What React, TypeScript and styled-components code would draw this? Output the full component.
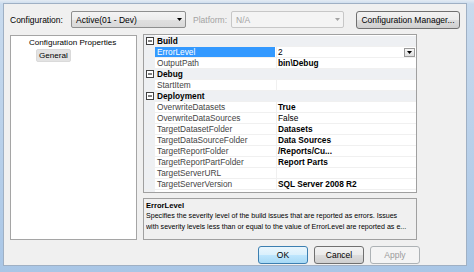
import React from 'react';
import styled, { createGlobalStyle, css } from 'styled-components';

const GlobalStyle = createGlobalStyle`
  html, body {
    margin: 0;
    padding: 0;
  }
  body {
    width: 474px;
    height: 272px;
    overflow: hidden;
    font-family: "Liberation Sans", Arial, sans-serif;
  }
`;

const Frame = styled.div`
  width: 474px;
  height: 272px;
  box-sizing: border-box;
  padding: 3px 7px 6px 3px;
  background: linear-gradient(180deg, #e4ebf3 0px, #c9dbee 4px, #a9c6e6 100%);
`;

const Dialog = styled.div`
  height: 100%;
  box-sizing: border-box;
  background: #f0f0f0;
  border: 1px solid #9fb0c4;
  padding: 5px 6px 0 6px;
  display: flex;
  flex-direction: column;
`;

const TopBar = styled.div`
  display: flex;
  align-items: center;
  height: 21px;
  font-size: 8.5px;
`;

const Label = styled.span<{ $disabled?: boolean; $width: number }>`
  width: ${(p) => p.$width}px;
  color: ${(p) => (p.$disabled ? '#a3a3a3' : '#000')};
  white-space: nowrap;
`;

const Combo = styled.div<{ $disabled?: boolean; $width: number }>`
  width: ${(p) => p.$width}px;
  height: 17px;
  box-sizing: border-box;
  display: flex;
  align-items: center;
  justify-content: space-between;
  padding: 0 3px 0 4px;
  border-radius: 2px;
  ${(p) =>
    p.$disabled
      ? css`
          border: 1px solid #c7c7c7;
          background: #f4f4f4;
          color: #a3a3a3;
        `
      : css`
          border: 1px solid #8e8f8f;
          background: linear-gradient(180deg, #f4f4f4 0%, #ececec 50%, #e0e0e0 51%, #d9d9d9 100%);
          color: #000;
        `}
`;

const Button = styled.button<{ $variant?: 'default' | 'disabled' | 'normal'; $width: number }>`
  width: ${(p) => p.$width}px;
  height: 18px;
  box-sizing: border-box;
  padding: 0;
  font-family: "Liberation Sans", Arial, sans-serif;
  font-size: 8.5px;
  border-radius: 3px;
  color: #000;
  border: 1px solid #707070;
  background: linear-gradient(180deg, #f2f2f2 0%, #ebebeb 50%, #dddddd 51%, #cfcfcf 100%);
  ${(p) =>
    p.$variant === 'default' &&
    css`
      border-color: #3c7fb1;
      background: linear-gradient(180deg, #eaf6fd 0%, #d9f0fc 50%, #bee6fd 51%, #a7d9f5 100%);
    `}
  ${(p) =>
    p.$variant === 'disabled' &&
    css`
      border-color: #adb2b5;
      background: #f4f4f4;
      color: #9a9a9a;
    `}
`;

const Body = styled.div`
  display: flex;
  gap: 6px;
  margin-top: 4px;
  height: 206px;
`;

const Tree = styled.div`
  width: 127px;
  height: 205px;
  box-sizing: border-box;
  margin-top: 1px;
  background: #fff;
  border: 1px solid #a5a5a5;
  padding-top: 1px;
  font-size: 8.1px;
`;

const TreeItem = styled.div<{ $level: number; $selected?: boolean }>`
  margin-left: ${(p) => 15 + p.$level * 10}px;
  width: fit-content;
  height: 12px;
  line-height: 12px;
  padding: 0 3px;
  border-radius: 2px;
  ${(p) =>
    p.$selected &&
    css`
      background: #e3e3e3;
      border: 1px solid #dadada;
      height: 11px;
      line-height: 11px;
      padding: 0 2px;
    `}
`;

const RightCol = styled.div`
  width: 274px;
  display: flex;
  flex-direction: column;
`;

const Grid = styled.div`
  height: 159px;
  box-sizing: border-box;
  border: 1px solid #a0a0a0;
  padding-top: 1px;
  background: linear-gradient(90deg, #eef0f3 11px, #fff 11px);
  font-size: 8.3px;
`;

const Row = styled.div<{ $category?: boolean }>`
  display: grid;
  grid-template-columns: 11px 121px 1fr;
  height: 11px;
  line-height: 10px;
  box-sizing: border-box;
  border-bottom: 1px solid #f0f0f0;
  background: ${(p) => (p.$category ? '#eef0f3' : 'transparent')};
`;

const Gutter = styled.div`
  display: flex;
  align-items: center;
  padding-left: 2px;
`;

const CategoryName = styled.div`
  grid-column: 2 / 4;
  padding-left: 2px;
  font-weight: bold;
  color: #000;
`;

const Name = styled.div<{ $selected?: boolean }>`
  padding-left: 2px;
  white-space: nowrap;
  overflow: hidden;
  color: ${(p) => (p.$selected ? '#fff' : '#444')};
  background: ${(p) => (p.$selected ? '#3399ff' : 'transparent')};
  margin-right: 1px;
`;

const Value = styled.div<{ $bold?: boolean }>`
  display: flex;
  align-items: center;
  padding-left: 1px;
  border-left: 1px solid #f0f0f0;
  font-weight: ${(p) => (p.$bold ? 'bold' : 'normal')};
  color: #000;
  white-space: nowrap;
  overflow: hidden;
`;

const DropButton = styled.div`
  margin-left: auto;
  margin-right: 1px;
  width: 11px;
  height: 9px;
  box-sizing: border-box;
  border: 1px solid #9a9a9a;
  background: linear-gradient(180deg, #f7f7f7, #dedede);
  display: flex;
  align-items: center;
  justify-content: center;
`;

const Desc = styled.div`
  margin-top: 5px;
  height: 42px;
  box-sizing: border-box;
  border: 1px solid #a0a0a0;
  background: #f0f0f0;
  padding: 2px 0 0 2px;
  font-size: 7.1px;
  color: #000;
`;

const DescTitle = styled.div`
  font-weight: bold;
  font-size: 7.6px;
  line-height: 10px;
`;

const DescLine = styled.div`
  line-height: 11px;
  white-space: nowrap;
  overflow: hidden;
`;

const Footer = styled.div`
  display: flex;
  justify-content: flex-end;
  gap: 6px;
  margin-top: 6px;
  padding-right: 40px;
`;

const Arrow = ({ color = '#000' }: { color?: string }) => (
  <svg width="5" height="3" viewBox="0 0 5 3">
    <path d="M0 0 H5 L2.5 3 Z" fill={color} />
  </svg>
);

const Expander = () => (
  <svg width="8" height="8" viewBox="0 0 8 8">
    <rect x="0.5" y="0.5" width="7" height="7" fill="#fff" stroke="#404040" />
    <path d="M2 4 H6" stroke="#000" />
  </svg>
);

interface PropItem {
  name: string;
  value?: string;
  bold?: boolean;
  selected?: boolean;
}

interface Category {
  title: string;
  items: PropItem[];
}

const categories: Category[] = [
  {
    title: 'Build',
    items: [
      { name: 'ErrorLevel', value: '2', selected: true },
      { name: 'OutputPath', value: 'bin\\Debug', bold: true },
    ],
  },
  {
    title: 'Debug',
    items: [{ name: 'StartItem' }],
  },
  {
    title: 'Deployment',
    items: [
      { name: 'OverwriteDatasets', value: 'True', bold: true },
      { name: 'OverwriteDataSources', value: 'False' },
      { name: 'TargetDatasetFolder', value: 'Datasets', bold: true },
      { name: 'TargetDataSourceFolder', value: 'Data Sources', bold: true },
      { name: 'TargetReportFolder', value: '/Reports/Cu...', bold: true },
      { name: 'TargetReportPartFolder', value: 'Report Parts', bold: true },
      { name: 'TargetServerURL' },
      { name: 'TargetServerVersion', value: 'SQL Server 2008 R2', bold: true },
    ],
  },
];

const App: React.FC = () => {
  return (
    <Frame>
      <GlobalStyle />
      <Dialog>
        <TopBar>
          <Label $width={61}>Configuration:</Label>
          <Combo $width={115}>
            <span>Active(01 - Dev)</span>
            <Arrow />
          </Combo>
          <Label $width={38} $disabled style={{ marginLeft: 7 }}>
            Platform:
          </Label>
          <Combo $width={113} $disabled>
            <span>N/A</span>
            <Arrow color="#a3a3a3" />
          </Combo>
          <Button $width={104} style={{ marginLeft: 12 }}>
            Configuration Manager...
          </Button>
        </TopBar>

        <Body>
          <Tree>
            <TreeItem $level={0}>Configuration Properties</TreeItem>
            <TreeItem $level={1} $selected>
              General
            </TreeItem>
          </Tree>

          <RightCol>
            <Grid>
              {categories.map((cat) => (
                <React.Fragment key={cat.title}>
                  <Row $category>
                    <Gutter>
                      <Expander />
                    </Gutter>
                    <CategoryName>{cat.title}</CategoryName>
                  </Row>
                  {cat.items.map((item) => (
                    <Row key={item.name}>
                      <Gutter />
                      <Name $selected={item.selected}>{item.name}</Name>
                      <Value $bold={item.bold}>
                        {item.value}
                        {item.selected && (
                          <DropButton>
                            <Arrow />
                          </DropButton>
                        )}
                      </Value>
                    </Row>
                  ))}
                </React.Fragment>
              ))}
            </Grid>

            <Desc>
              <DescTitle>ErrorLevel</DescTitle>
              <DescLine>
                Specifies the severity level of the build issues that are reported as errors. Issues
              </DescLine>
              <DescLine>
                with severity levels less than or equal to the value of ErrorLevel are reported as e...
              </DescLine>
            </Desc>
          </RightCol>
        </Body>

        <Footer>
          <Button $width={50} $variant="default">
            OK
          </Button>
          <Button $width={50}>Cancel</Button>
          <Button $width={50} $variant="disabled">
            Apply
          </Button>
        </Footer>
      </Dialog>
    </Frame>
  );
};

export default App;
